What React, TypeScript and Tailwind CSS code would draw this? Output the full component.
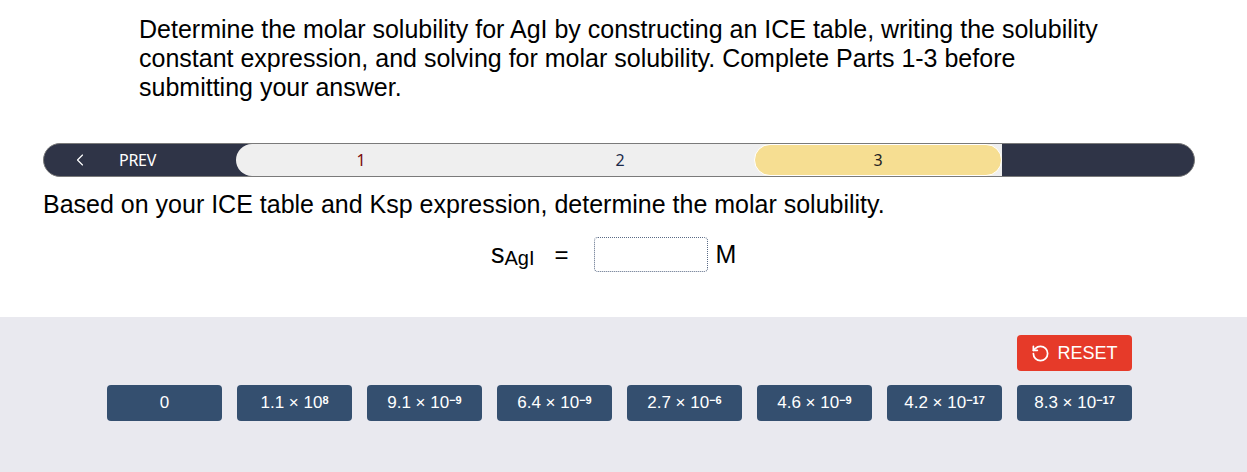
import { ChevronLeft, RotateCcw } from "lucide-react";

const answers: { base: string; exp?: string }[] = [
	{ base: "0" },
	{ base: "1.1 × 10", exp: "8" },
	{ base: "9.1 × 10", exp: "−9" },
	{ base: "6.4 × 10", exp: "−9" },
	{ base: "2.7 × 10", exp: "−6" },
	{ base: "4.6 × 10", exp: "−9" },
	{ base: "4.2 × 10", exp: "−17" },
	{ base: "8.3 × 10", exp: "−17" },
];

function StepNav() {
	return (
		<div className="ml-[43px] mr-[52px] flex h-[34px] items-stretch overflow-hidden rounded-full border border-[#7a7a7a] bg-[#2f3447] font-['Noto_Sans',sans-serif] text-[16px]">
			{/* Prev */}
			<div className="flex w-[192px] shrink-0 items-center text-white">
				<ChevronLeft className="ml-[26px] h-[20px] w-[20px]" strokeWidth={1.4} />
				<span className="ml-[29px] tracking-[-0.3px]">PREV</span>
			</div>

			{/* Track */}
			<div className="flex w-[766px] shrink-0 items-stretch rounded-l-full bg-[#efefef]">
				<div className="flex w-[250px] items-center justify-center text-[#7a0a0a]">
					1
				</div>
				<div className="flex w-[268px] items-center justify-center text-[#1b2a4a]">
					2
				</div>
				<div className="flex w-[248px] items-center justify-center rounded-full border border-white bg-[#f6de92] text-[#222]">
					3
				</div>
			</div>
			<div className="flex-1" />
		</div>
	);
}

export default function App() {
	return (
		<div className="flex min-h-[472px] flex-col bg-white font-['Liberation_Sans',Arial,sans-serif] text-black">
			<p className="ml-[139px] w-[985px] pt-[15px] text-[25px] leading-[29px]">
				Determine the molar solubility for AgI by constructing an ICE table,
				writing the solubility constant expression, and solving for molar
				solubility. Complete Parts 1-3 before submitting your answer.
			</p>

			<div className="mt-[41px]">
				<StepNav />
			</div>

			<p className="ml-[43px] mt-[13px] text-[25px] leading-[29px]">
				Based on your ICE table and Ksp expression, determine the molar
				solubility.
			</p>

			<div className="mt-[18px] flex items-center pl-[491px]">
				<span className="text-[27px] leading-none">
					s
					<sub className="relative top-[2px] text-[20px]">AgI</sub>
				</span>
				<span className="ml-[20px] text-[24px] leading-none">=</span>
				<div className="ml-[25px] h-[35px] w-[114px] rounded-[4px] border border-dotted border-[#5a6a85] bg-white" />
				<span className="ml-[8px] text-[25px] leading-none">M</span>
			</div>

			<div className="mt-[45px] flex flex-1 flex-col bg-[#e9e9ef] pl-[107px] pt-[18px]">
				<div className="flex w-[1025px] justify-end">
					<button className="flex h-[36px] w-[115px] items-center justify-center gap-[7px] rounded-[4px] bg-[#e63a29] text-[18px] text-white">
						<RotateCcw className="h-[19px] w-[19px]" strokeWidth={2.2} />
						RESET
					</button>
				</div>
				<div className="mt-[14px] flex gap-[15px]">
					{answers.map((a) => (
						<button
							key={a.base + (a.exp ?? "")}
							className="flex h-[36px] w-[115px] items-center justify-center rounded-[4px] bg-[#344f6f] text-[17px] text-white"
						>
							{a.base}
							{a.exp && (
								<sup className="relative -top-[3px] text-[11px] font-bold">{a.exp}</sup>
							)}
						</button>
					))}
				</div>
			</div>
		</div>
	);
}
